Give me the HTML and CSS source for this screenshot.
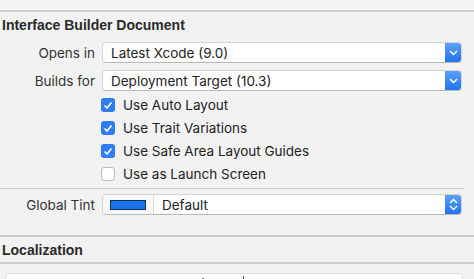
FILE: index.html
```html
<!DOCTYPE html>
<html lang="en">
<head>
    <meta charset="UTF-8">
    <meta name="viewport" content="width=device-width, initial-scale=1.0">
    <title>Interface Builder Document</title>
    <link rel="stylesheet" href="styles.css">
</head>
<body>
    <div class="inspector">
        <div class="topStrip"></div>

        <div class="section">
            <h3 class="sectionTitle">Interface Builder Document</h3>

            <div class="row">
                <label class="rowLabel">Opens in</label>
                <div class="popup">
                    <span class="popupText">Latest Xcode (9.0)</span>
                    <span class="popupArrow">
                        <svg width="9" height="6" viewBox="0 0 9 6"><path d="M1 1 L4.5 4.5 L8 1" fill="none" stroke="#fff" stroke-width="1.5"/></svg>
                    </span>
                </div>
            </div>

            <div class="row">
                <label class="rowLabel">Builds for</label>
                <div class="popup">
                    <span class="popupText">Deployment Target (10.3)</span>
                    <span class="popupArrow">
                        <svg width="9" height="6" viewBox="0 0 9 6"><path d="M1 1 L4.5 4.5 L8 1" fill="none" stroke="#fff" stroke-width="1.5"/></svg>
                    </span>
                </div>
            </div>

            <div class="checks">
                <div class="check"><span class="box on"><svg width="10" height="9" viewBox="0 0 10 9"><path d="M1.5 4.5 L4 7 L8.5 1.5" fill="none" stroke="#fff" stroke-width="1.6"/></svg></span>Use Auto Layout</div>
                <div class="check"><span class="box on"><svg width="10" height="9" viewBox="0 0 10 9"><path d="M1.5 4.5 L4 7 L8.5 1.5" fill="none" stroke="#fff" stroke-width="1.6"/></svg></span>Use Trait Variations</div>
                <div class="check"><span class="box on"><svg width="10" height="9" viewBox="0 0 10 9"><path d="M1.5 4.5 L4 7 L8.5 1.5" fill="none" stroke="#fff" stroke-width="1.6"/></svg></span>Use Safe Area Layout Guides</div>
                <div class="check"><span class="box"></span>Use as Launch Screen</div>
            </div>

            <div class="divider"></div>

            <div class="row tintRow">
                <label class="rowLabel">Global Tint</label>
                <div class="popup">
                    <span class="swatchWell"><span class="swatch"></span></span>
                    <span class="popupText">Default</span>
                    <span class="popupArrow">
                        <svg width="9" height="13" viewBox="0 0 9 13"><path d="M1 5 L4.5 1.5 L8 5 M1 8 L4.5 11.5 L8 8" fill="none" stroke="#fff" stroke-width="1.5"/></svg>
                    </span>
                </div>
            </div>
        </div>

        <div class="section">
            <h3 class="sectionTitle locTitle">Localization</h3>
            <div class="locBox"><span class="locDot"></span><span class="locTick"></span></div>
        </div>
    </div>
</body>
</html>
```

FILE: styles.css
```css
body {
    font-family: Inter, "Liberation Sans", Arial, sans-serif;
    font-size: 13.5px;
    color: #262626;
    background-color: #f2f2f2;
    margin: 0;
    padding: 0;
    overflow: hidden;
}
.topStrip {
    height: 10px;
    background-color: #f5f5f5;
}
.section {
    border-top: 2px solid #cdcdcd;
}
.sectionTitle {
    margin: 0;
    padding: 5px 0 0 2px;
    height: 25px;
    font-family: "Liberation Sans", Arial, sans-serif;
    font-size: 14px;
    font-weight: bold;
    color: #2a2a2a;
}
.locTitle {
    height: 20px;
    border-bottom: 2px solid #cdcdcd;
}
.row {
    display: flex;
    align-items: center;
    gap: 7px;
    margin-right: 12px;
    margin-bottom: 7px;
}
.rowLabel {
    width: 95px;
    flex: none;
    text-align: right;
    color: #333333;
}
.popup {
    flex: 1;
    display: flex;
    align-items: center;
    height: 21px;
    background-color: #ffffff;
    border: 1px solid #d4d4d4;
    border-bottom-color: #b8b8b8;
    border-radius: 4px;
    box-sizing: border-box;
    overflow: hidden;
}
.popupText {
    flex: 1;
    padding-left: 8px;
    color: #222222;
}
.popupArrow {
    width: 17px;
    align-self: stretch;
    margin: -1px -1px -1px 0;
    display: flex;
    align-items: center;
    justify-content: center;
    background: linear-gradient(#5ca3f9, #1e70ee);
    border-radius: 0 4px 4px 0;
}
.checks {
    display: flex;
    flex-direction: column;
    padding-left: 101px;
    gap: 9px;
}
.check {
    display: flex;
    align-items: center;
    gap: 8px;
    height: 14px;
    color: #222222;
}
.box {
    width: 14px;
    height: 14px;
    box-sizing: border-box;
    border: 1px solid #bdbdbd;
    border-radius: 3px;
    background-color: #ffffff;
    display: flex;
    align-items: center;
    justify-content: center;
}
.box.on {
    border: none;
    background-color: #2f7cf6;
}
.divider {
    height: 1px;
    background-color: #cfcfcf;
    margin: 7px 10px 5px 0;
}
.tintRow {
    margin-bottom: 20px;
}
.swatchWell {
    width: 50px;
    align-self: stretch;
    display: flex;
    align-items: center;
    justify-content: center;
    border-right: 1px solid #dcdcdc;
    background-color: #f8f8f8;
}
.swatch {
    width: 34px;
    height: 8px;
    background-color: #1a73e8;
    border: 1px solid #0d2f66;
}
.locBox {
    margin: 9px 11px 0 5px;
    height: 20px;
    background-color: #ffffff;
    border: 1px solid #dadada;
    border-radius: 4px;
    position: relative;
}
.locDot {
    position: absolute;
    left: 196px;
    top: 4px;
    width: 2px;
    height: 1px;
    background-color: #777777;
}
.locTick {
    position: absolute;
    left: 237px;
    top: 2px;
    width: 1px;
    height: 4px;
    background-color: #555555;
}
```
